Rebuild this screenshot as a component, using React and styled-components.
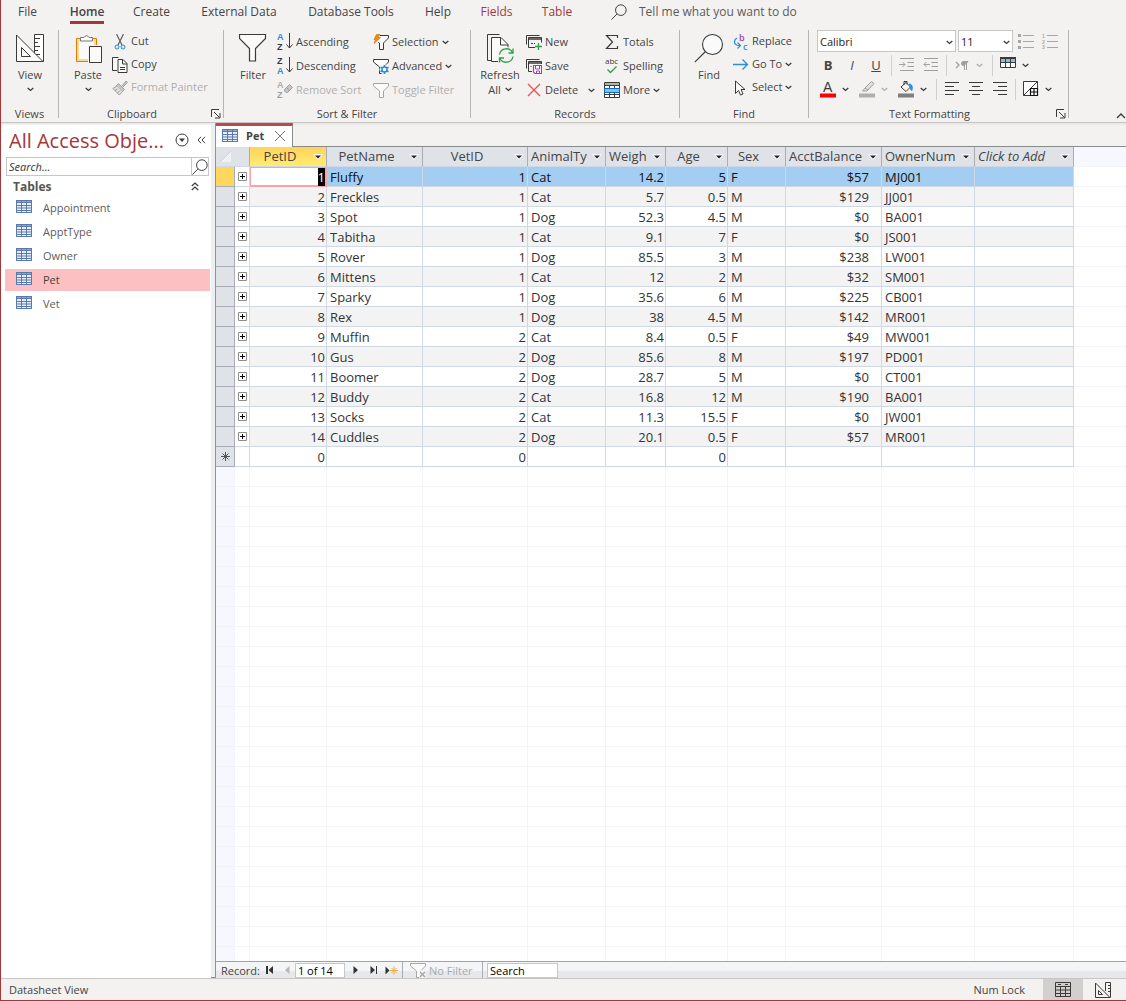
import React from 'react';
import styled, { createGlobalStyle, css } from 'styled-components';

const color = {
    red: '#a4373a',
    ribbon: '#f3f2f1',
    ink: '#444444',
    faded: '#b1aeac',
    line: '#d0d7e5',
    head: '#dfe3e8',
    headLine: '#a9adb5',
    blue: '#2b8fd6',
};

const GlobalStyle = createGlobalStyle`
    * { box-sizing: border-box; }
    body {
        margin: 0;
        font-family: "Open Sans", "Noto Sans", sans-serif;
        font-size: 11px;
        color: ${color.ink};
    }
    button, input, select { font: inherit; color: inherit; }
    button { border: 0; padding: 0; background: none; }
    svg { display: block; flex: none; }
`;

const Window = styled.div`
    height: 100vh;
    display: flex;
    flex-direction: column;
    background: #fff;
    border-left: 1px solid ${color.red};
    border-bottom: 1px solid ${color.red};
    overflow: hidden;
`;

/* ---------- ribbon ---------- */

const Ribbon = styled.header`
    flex: none;
    background: ${color.ribbon};
    border-bottom: 1px solid #c8c6c4;
`;

const TabBar = styled.nav`
    display: flex;
    height: 24px;
`;

const RibbonTab = styled.button`
    width: ${p => p.$width}px;
    height: 24px;
    flex: none;
    display: flex;
    flex-direction: column;
    align-items: center;
    padding-top: 2px;
    font-size: 12px;
    line-height: 19px;
    white-space: nowrap;
    color: ${p => (p.$context ? color.red : color.ink)};

    ${p => p.$active && css`
        font-weight: 600;
        span { border-bottom: 3px solid ${color.red}; }
    `}
`;

const TellMe = styled.button`
    display: flex;
    align-items: center;
    gap: 12px;
    margin-left: 21px;
    font-size: 12px;
    line-height: 22px;
    color: #5d5b59;
`;

const RibbonBody = styled.div`
    display: flex;
    height: 98px;
    padding-top: 6px;
`;

const Group = styled.section`
    width: ${p => p.$width}px;
    flex: none;
    display: flex;
    flex-direction: column;
`;

const GroupBody = styled.div`
    height: 76px;
    display: flex;
    gap: ${p => p.$gap || 2}px;
    padding-left: 7px;
`;

const GroupLabel = styled.div`
    display: flex;
    align-items: center;
    line-height: 16px;
    font-size: 11px;
    span { flex: 1; text-align: center; }
    button { width: 18px; padding-left: 6px; }
`;

const Divider = styled.div`
    width: 1px;
    flex: none;
    height: 88px;
    background: #b8b6b4;
`;

const BigButton = styled.button`
    width: 44px;
    height: 72px;
    display: flex;
    flex-direction: column;
    align-items: center;
    padding-top: 3px;
    line-height: 15px;
    > svg { margin-bottom: 4px; }
`;

const BigCaption = styled.span`
    display: flex;
    align-items: center;
    justify-content: center;
    gap: 4px;
    height: 15px;
`;

const Column = styled.div`
    width: ${p => (p.$width ? p.$width + 'px' : 'auto')};
    display: flex;
    flex-direction: column;
`;

const SmallRow = styled.div`
    display: flex;
    justify-content: space-between;
    align-items: center;
    padding-right: 5px;
`;

const SmallButton = styled.button`
    height: ${p => p.$height}px;
    display: flex;
    align-items: center;
    gap: 3px;
    white-space: nowrap;
    color: ${p => (p.disabled ? color.faded : color.ink)};
    span { padding-bottom: 2px; }
`;

const FormatRow = styled.div`
    display: flex;
    align-items: ${p => (p.$top ? 'flex-start' : 'center')};
    height: ${p => (p.$top ? 23 : 24)}px;
`;

const FormatButton = styled.button`
    width: 24px;
    height: 22px;
    display: flex;
    align-items: center;
    justify-content: center;
    font-size: 13px;
    line-height: 18px;
`;

const DropButton = styled.button`
    width: 15px;
    height: 22px;
    display: flex;
    align-items: center;
    padding-left: 2px;
`;

const FormatDivider = styled.div`
    width: 1px;
    height: 21px;
    margin: 0 3px;
    background: #d2d0ce;
`;

const SelectBox = styled.div`
    position: relative;
    width: ${p => p.$width}px;
    height: 22px;
    margin: 0 1px;

    select {
        appearance: none;
        width: 100%;
        height: 100%;
        padding: 0 2px;
        border: 1px solid #c8c6c4;
        border-radius: 0;
        background: #fff;
        color: #252423;
    }
    svg {
        position: absolute;
        right: 3px;
        top: 10px;
        pointer-events: none;
    }
`;

const Collapse = styled.button`
    margin-left: auto;
    align-self: flex-end;
    padding: 0 0 3px;
`;

/* ---------- navigation pane ---------- */

const Workspace = styled.div`
    flex: 1;
    min-height: 0;
    display: flex;
`;

const NavPane = styled.aside`
    width: 210px;
    flex: none;
    background: linear-gradient(#e6e5e4, #fff 3px);
`;

const NavTitle = styled.div`
    display: flex;
    align-items: center;
    height: 34px;
    padding: 0 5px 0 8px;
    h1 {
        flex: 1;
        margin: 0;
        padding-top: 2px;
        font-size: 20px;
        font-weight: 400;
        line-height: 32px;
        color: ${color.red};
        white-space: nowrap;
    }
    button { margin-left: 8px; }
`;

const NavSearch = styled.div`
    display: flex;
    width: 203px;
    height: 19px;
    margin-left: 5px;
    border: 1px solid #c8c6c4;
    input {
        flex: 1;
        min-width: 0;
        border: 0;
        padding: 0 2px;
        font-style: italic;
        background: transparent;
    }
    input::placeholder { color: #333; opacity: 1; }
    button {
        width: 17px;
        border-left: 1px solid #c8c6c4;
    }
`;

const NavSection = styled.div`
    display: flex;
    align-items: center;
    justify-content: space-between;
    height: 21px;
    padding: 0 12px 0 12px;
    font-size: 12px;
    font-weight: 700;
    color: #555;
`;

const NavItem = styled.button`
    display: flex;
    align-items: center;
    gap: 11px;
    width: 205px;
    height: 22px;
    margin: 0 0 2px 4px;
    padding: 0 0 2px 11px;
    text-align: left;
    color: ${p => (p.$selected ? '#444' : '#5d5d5d')};
    background: ${p => (p.$selected ? '#fdc0c2' : 'transparent')};
`;

const Splitter = styled.div`
    width: 5px;
    flex: none;
    background: #eeeff1;
    border-right: 1px solid #8d939b;
    border-bottom: 1px solid #8d939b;
`;

/* ---------- datasheet ---------- */

const Document = styled.main`
    flex: 1;
    min-width: 0;
    display: flex;
    flex-direction: column;
`;

const DocTabs = styled.div`
    display: flex;
    height: 24px;
    flex: none;
    background: linear-gradient(#e6e5e4, ${color.ribbon} 3px);
    border-bottom: 1px solid #868c8c;
`;

const DocTab = styled.div`
    display: flex;
    align-items: center;
    width: 77px;
    height: 24px;
    padding: 0 6px 2px;
    background: #fff;
    border-top: 3px solid #c0474e;
    border-right: 1px solid #868c8c;
    font-weight: 700;
    span { flex: 1; padding-left: 8px; }
`;

const Sheet = styled.div`
    flex: 1;
    min-height: 0;
    display: flex;
    flex-direction: column;
    overflow: hidden;
    background:
        linear-gradient(#f7f7ff, #f7f7ff) 0 0 / 100% 19px no-repeat,
        repeating-linear-gradient(#fff 0 19px, #f3f4f8 19px 20px);
`;

const Table = styled.table`
    flex: none;
    width: 858px;
    table-layout: fixed;
    border-collapse: separate;
    border-spacing: 0;
    font-size: 13px;
    line-height: 17px;
    color: #333;
`;

const HeadCell = styled.th`
    height: 20px;
    padding: 0;
    font-weight: 400;
    font-style: ${p => (p.$italic ? 'italic' : 'normal')};
    color: #444;
    background: ${p => (p.$active ? 'linear-gradient(#ffd35a, #ffec72)' : color.head)};
    border-right: 1px solid ${color.headLine};
    border-bottom: 1px solid ${color.line};
`;

const HeadInner = styled.div`
    display: flex;
    align-items: center;
    height: 19px;
    padding: 0 3px;
    white-space: nowrap;
    span {
        flex: 1;
        min-width: 0;
        padding-right: ${p => (p.$left ? 0 : 6)}px;
        text-align: ${p => (p.$left ? 'left' : 'center')};
    }
`;

const Row = styled.tr`
    background: ${p => (p.$current ? '#a3cef1' : p.$shaded ? '#f3f3f3' : '#fff')};
    color: ${p => (p.$current ? '#111' : '#333')};
`;

const Cell = styled.td`
    height: 20px;
    padding: 2px ${p => (p.$money ? 12 : 1)}px 0 3px;
    text-align: ${p => (p.$right ? 'right' : 'left')};
    white-space: nowrap;
    border-right: 1px solid ${color.line};
    border-bottom: 1px solid ${color.line};
    ${p => p.$editing && css`
        background: #fff;
        box-shadow: inset 0 0 0 1px #f7a3a8;
        outline: 1px solid #f7a3a8;
        outline-offset: -1px;
    `}
    mark { background: #000; color: #fff; }
`;

const Selector = styled.td`
    height: 20px;
    padding: 0;
    background: ${p => (p.$current ? '#ffd75e' : color.head)};
    border-right: 1px solid ${color.headLine};
    border-bottom: 1px solid ${color.headLine};
    svg { margin: 0 auto; }
`;

const ExpandCell = styled.td`
    padding: 0;
    background: #fff;
    border-right: 1px solid ${color.line};
    border-bottom: 1px solid ${color.line};
    button { display: block; margin: 0 auto; }
`;

const Empty = styled.div`
    flex: 1;
    min-height: 0;
    display: grid;
    grid-template-columns: ${p => p.$columns};
    div { border-right: 1px solid #f3f4f8; }
    div:first-child {
        background: repeating-linear-gradient(#f7f7ff 0 19px, #f1f2f8 19px 20px);
    }
`;

const RecordBar = styled.div`
    display: flex;
    align-items: center;
    height: 17px;
    flex: none;
    padding-left: 5px;
    border-top: 1px solid #9fa4ab;
    background: linear-gradient(#f4f5f7 0 9px, #e6e8eb 9px);
`;

const RecordInput = styled.input`
    width: ${p => p.$width}px;
    height: 15px;
    padding: 0 2px;
    border: 1px solid #c4c7cc;
    background: #fff;
    && { color: #000; }
`;

const StepButton = styled.button`
    width: ${p => p.$width || 20}px;
    height: 16px;
    display: flex;
    align-items: center;
    justify-content: center;
`;

const BarDivider = styled.div`
    width: 1px;
    height: 16px;
    margin-right: 4px;
    background: #a9adb5;
`;

const NoFilter = styled.button`
    display: flex;
    align-items: center;
    gap: 3px;
    width: 75px;
    padding-left: 3px;
    color: #a8a8a8;
    white-space: nowrap;
`;

const StatusBar = styled.footer`
    display: flex;
    align-items: center;
    height: 22px;
    flex: none;
    padding: 0 3px 0 8px;
    background: ${color.ribbon};
    border-top: 1px solid #c8c6c4;
    span:first-child { flex: 1; }
    span:nth-child(2) { margin-right: 18px; }
`;

const ViewButton = styled.button`
    width: 40px;
    height: 21px;
    display: flex;
    align-items: center;
    justify-content: center;
    background: ${p => (p.$active ? '#d2d0ce' : 'transparent')};
`;

/* ---------- icons ---------- */

const Svg = ({ w = 16, h = 16, children, ...rest }) => (
    <svg width={w} height={h} viewBox={`0 0 ${w} ${h}`} fill="none" stroke="#3b3a39" aria-hidden="true" {...rest}>
        {children}
    </svg>
);

const Letter = styled.text`
    font-family: "Liberation Sans", sans-serif;
    font-size: ${p => p.$size || 9}px;
    font-weight: ${p => (p.$thin ? 400 : 700)};
    stroke: none;
`;

const Chevron = ({ faded }) => (
    <Svg w={7} h={5} stroke={faded ? color.faded : '#3b3a39'} strokeWidth="1.3">
        <path d="M.7 1l2.8 2.5L6.3 1" />
    </Svg>
);

const ViewIcon = () => (
    <Svg w={30} h={30}>
        <path d="M19.5 1.5h9v27h-9z" fill="#fff" />
        <path d="M20 5.5h5M20 9.5h3M20 13.5h5M20 17.5h3M20 21.5h5M20 25h3" />
        <path d="M1.5 2v26.5H28z" fill="#fafafa" />
        <path d="M6.500 14.500v9h9z" />
    </Svg>
);

const PasteIcon = () => (
    <Svg w={30} h={30}>
        <path d="M3.500 5.500h20v23h-20z" fill="#f8dc8f" stroke="#e07a10" />
        <path d="M6 8h15v18H6z" fill="#fafafa" stroke="none" />
        <path d="M7.500 8V4.500H11a2.700 2.700 0 0 1 5 0h3.500V8z" fill="#fff" stroke="#797775" />
        <path d="M15 12h15v18H15z" fill={color.ribbon} stroke="none" />
        <path d="M16.500 13.500h12v16h-12z" fill="#fafafa" />
    </Svg>
);

const FunnelIcon = () => (
    <Svg w={28} h={30}>
        <path d="M.5 1.500h26v4l-10 10v12.500h-6V15.500L.5 5.500z" fill="#fafafa" strokeWidth="1.200" />
    </Svg>
);

const RefreshIcon = () => (
    <Svg w={28} h={30}>
        <path d="M5.500 27.500h-4v-26h12" />
        <path d="M12 28.500H5.500v-24h9.500l7 7V16" fill="#fafafa" />
        <path d="M14.500 4.500v7.500h7.500" />
        <circle cx="20" cy="22.500" r="8.500" fill={color.ribbon} stroke="none" />
        <g stroke="#2f9e4a" strokeWidth="1.300">
            <path d="M13.500 21.500a7 7 0 0 1 13.300-1.500M27 23.500a7 7 0 0 1-13.300 1.500" />
            <path d="M27 15.500v4.500h-4.500M13.500 29.500V25H18" />
        </g>
    </Svg>
);

const LensIcon = ({ size = 30, fill = '#fafafa' }) => (
    <svg width={size} height={size} viewBox="0 0 30 30" fill="none" stroke="#3b3a39" strokeWidth={size < 20 ? 1.8 : 1.1} aria-hidden="true">
        <circle cx="18.500" cy="11.500" r="10" fill={fill} />
        <path d="M11.500 18.500L.8 29.200" />
    </svg>
);

const CutIcon = () => (
    <Svg>
        <path d="M4.500 0l5.500 11M11.500 0L6 11" stroke="#605e5c" strokeWidth="1.200" />
        <circle cx="5" cy="13" r="2" stroke={color.blue} fill="#d5ebfa" />
        <circle cx="11" cy="13" r="2" stroke={color.blue} fill="#d5ebfa" />
    </Svg>
);

const CopyIcon = () => (
    <Svg>
        <path d="M5 13.500H.5V.5h6M6 2.500h5l4 4v9H6z" fill="#fafafa" />
        <path d="M10.500 3v4H15M8 10.500h5M8 12.500h5" />
    </Svg>
);

const PainterIcon = () => (
    <Svg stroke="#a19f9d">
        <path d="M10 6l4-5 1.500 1.500L11 7" fill="#c8c6c4" />
        <path d="M6.500 3.500l6 6-2 2-6-6z" fill="#c8c6c4" />
        <path d="M5 6L.8 8.500l6.500 6.500L10.500 11.500" fill="#e1dfdd" />
        <path d="M3 10.500l2.500-1.500M5.500 13l2.500-2.500" />
    </Svg>
);

const SortIcon = ({ first, second, flip }) => (
    <Svg w={16} h={20}>
        <Letter x="0" y="8" fill={flip ? '#3b3a39' : color.blue}>{first}</Letter>
        <Letter x="0" y="18" fill={flip ? color.blue : '#3b3a39'}>{second}</Letter>
        <path d="M12.500 1v15M9.500 12.500l3 3.500 3-3.500" />
    </Svg>
);

const RemoveSortIcon = () => (
    <Svg w={16} h={20} stroke="#a19f9d">
        <Letter x="0" y="8" fill="#b1aeac">A</Letter>
        <Letter x="0" y="18" fill="#a19f9d">Z</Letter>
        <path d="M7.500 9.500l5-5 3 3-5 5H9L7.500 11z" fill="#c8c6c4" />
        <path d="M9.500 7.500l3 3" />
    </Svg>
);

const SmallFunnel = ({ kind }) => (
    <Svg stroke={kind === 'off' || kind === 'clear' ? '#a8a6a4' : '#3b3a39'}>
        <path d="M.5 1.500h15v2.500l-5 5v6.500h-4V9L.5 4z" fill="#fafafa" />
        {kind === 'selection' && (
            <>
                <path d="M0 0h7v8H0z" fill={color.ribbon} stroke="none" />
                <path d="M3.500.5h3.500l-2 3h2.500L1 9.500l1.500-4H1z" fill="#f28a1c" stroke="#d9730d" strokeWidth=".7" />
            </>
        )}
        {kind === 'advanced' && (
            <>
                <circle cx="11.500" cy="11.500" r="5" fill={color.ribbon} stroke="none" />
                <circle cx="11.500" cy="11.500" r="2.500" stroke={color.blue} strokeWidth="1.400" fill="#fff" />
                <path d="M11.500 7v2M11.500 14v2M7.500 9.300l1.700 1M13.700 12.800l1.800 1M7.500 13.800l1.700-1M13.700 10.300l1.800-1" stroke={color.blue} strokeWidth="1.600" />
            </>
        )}
        {kind === 'clear' && (
            <>
                <path d="M9 8h7v8H9z" fill="#f0f1f3" stroke="none" />
                <path d="M10 10l5 5M15 10l-5 5" strokeWidth="1.400" />
            </>
        )}
    </Svg>
);

const NewIcon = () => (
    <Svg>
        <path d="M.5 10.500v-9h13M2.500 3.500h13v10h-13z" />
        <path d="M3 5h12" strokeWidth="1.500" />
        <path d="M5 9.500h2M8 9.500h2" />
        <path d="M9 8.500h7v7H9z" fill={color.ribbon} stroke="none" />
        <path d="M12.500 9v7M9 12.500h7" stroke="#2f9e4a" strokeWidth="1.300" />
    </Svg>
);

const SaveIcon = () => (
    <Svg>
        <path d="M.5 10.500v-9h13M6 13.500H2.500v-10h13V6" />
        <path d="M3 5h12" strokeWidth="1.500" />
        <path d="M4.500 8.500h1" />
        <path d="M7.500 7.500h8v8h-6.500l-1.500-1.500z" fill="#fff" stroke="#a33fb5" strokeWidth="1.200" />
        <path d="M9.500 8v3h4V8M10.500 15.500v-2.500h3v2.500" stroke="#a33fb5" />
    </Svg>
);

const DeleteIcon = () => (
    <Svg stroke="#e8504f" strokeWidth="1.300">
        <path d="M2 2l12 12M14 2L2 14" />
    </Svg>
);

const SigmaIcon = () => (
    <Svg strokeWidth="1.200">
        <path d="M13.500 4V1.500H2.500L8.500 8l-6 6.500h11V12" />
    </Svg>
);

const SpellingIcon = () => (
    <Svg w={16} h={18}>
        <text x="1" y="7" fontSize="8" stroke="none" fill="#3b3a39">abc</text>
        <path d="M3.500 12.500l3 3 6-6" stroke="#2f9e4a" strokeWidth="1.300" />
    </Svg>
);

const MoreIcon = () => (
    <Svg>
        <path d="M.5.500h15v15H.5z" fill="#fff" />
        <path d="M1 1h14v2.500H1z" fill="#b5b3b1" stroke="none" />
        <path d="M.5 3.500h15M5.500 4v11.500M10.500 4v11.500M.5 12.500h15" />
        <path d="M.5 6.500h15v4H.5z" fill="#83beec" stroke="#0f6cbd" />
    </Svg>
);

const ReplaceIcon = () => (
    <Svg>
        <text x="6" y="7" fontSize="9" fontWeight="600" stroke="none" fill="#a33fb5">b</text>
        <text x="10" y="16" fontSize="9" fontWeight="600" stroke="none" fill={color.blue}>c</text>
        <path d="M4 4C.5 6 .5 11 5 11.500H7M4.500 8.500l3 3-3 3" stroke={color.blue} strokeWidth="1.200" />
    </Svg>
);

const GoToIcon = () => (
    <Svg stroke={color.blue} strokeWidth="1.300">
        <path d="M0 7.500h14.500M9.500 2.500l5 5-5 5" />
    </Svg>
);

const PointerIcon = () => (
    <Svg>
        <path d="M2.500 1v12.500l3-3 2 4.500 2.500-1-2-4.500h4z" fill="#fafafa" />
    </Svg>
);

const LauncherIcon = () => (
    <Svg w={10} h={10}>
        <path d="M.5 8V.5H8M3 3l5.500 5.500M9 4v5H4" />
    </Svg>
);

const ListIcon = ({ numbered }) => (
    <Svg stroke="#a8a6a4">
        {numbered ? (
            <>
                <Letter x="0" y="5" $size={5} fill="#a8a6a4">1</Letter>
                <Letter x="0" y="11" $size={5} fill="#a8a6a4">2</Letter>
                <Letter x="0" y="16" $size={5} fill="#a8a6a4">3</Letter>
            </>
        ) : (
            <path d="M0 2.500h3M0 8.500h3M0 14.500h3" strokeWidth="3" />
        )}
        <path d="M5 2.500h11M5 8.500h11M5 14.500h11" />
    </Svg>
);

const IndentIcon = ({ out }) => (
    <Svg stroke="#a19f9d">
        <path d="M1 1.500h14M8.500 5.500H15M8.500 9.500H15M1 13.500h14" />
        <path d={out ? 'M1 7.500h6M3.500 5L1 7.500 3.500 10' : 'M0 7.500h6M3.500 5L6 7.500 3.500 10'} />
    </Svg>
);

const ParagraphIcon = () => (
    <Svg w={14} h={12} stroke="#a19f9d">
        <path d="M1 3l3 3-3 3" strokeWidth="1.300" />
        <path d="M13 2.500H8.500a2 2 0 0 0 0 4H9zM9.500 2.500V11M11.500 2.500V11" fill="#a19f9d" />
    </Svg>
);

const GridlinesIcon = () => (
    <Svg>
        <path d="M.5 1.500h15v9H.5z" fill="#fff" />
        <path d="M1 2h14v3H1z" fill="#83beec" stroke="none" />
        <path d="M.5 5.500h15M5.500 2v8.500M10.500 2v8.500" />
        <path d="M0 1h16" strokeWidth="2" />
    </Svg>
);

const FontColorIcon = () => (
    <Svg w={16} h={18}>
        <Letter x="3" y="12" $size={14} $thin fill="#3b3a39">A</Letter>
        <path d="M0 13.500h16v4H0z" fill="#ff0000" stroke="none" />
    </Svg>
);

const HighlightIcon = () => (
    <Svg w={16} h={18} stroke="#a19f9d">
        <path d="M6 8l6.500-6.500 2.500 2L9 10zM6 8l-2.500 3H8l1-1" fill="#e1dfdd" />
        <path d="M0 13.500h16v4H0z" fill="#b1aeac" stroke="none" />
    </Svg>
);

const FillIcon = () => (
    <Svg w={16} h={18}>
        <path d="M8 2.500L12.500 7 8 11.500 3 7zM6 5V1.500h3v3" fill="#fafafa" />
        <path d="M11.500 4c3 .5 3 3 2.500 6.500-2-.5-1.500-3-2.500-6.500" fill={color.blue} stroke={color.blue} />
        <path d="M0 13.500h16v4H0z" fill="#7f7f7f" stroke="none" />
    </Svg>
);

const AlignIcon = ({ lines }) => (
    <Svg>
        <path d={lines} />
    </Svg>
);

const AlternateIcon = () => (
    <Svg>
        <path d="M.5.500h14v14H.5z" fill="#fff" />
        <path d="M.5 14.500l14-14" />
        <path d="M7.500 7.500h7v7h-7zM11 7.500v7M7.500 11h7" stroke="#111" strokeWidth="1.200" fill="#fff" />
    </Svg>
);

const TableIcon = () => (
    <Svg stroke="none">
        <path d="M0 1h16v13H0z" fill="#5b79ae" />
        <path d="M1 4h4v2H1zM6 4h4v2H6zM11 4h4v2h-4zM1 7h4v1.500H1zM6 7h4v1.500H6zM11 7h4v1.500h-4zM1 9.500h4V11H1zM6 9.500h4V11H6zM11 9.500h4V11h-4zM1 12h4v1H1zM6 12h4v1H6zM11 12h4v1h-4z" fill="#e8eff9" />
        <path d="M1 2h4v1H1zM6 2h4v1H6zM11 2h4v1h-4z" fill="#8ea9d6" />
    </Svg>
);

const MenuIcon = () => (
    <Svg w={14} h={14}>
        <circle cx="7" cy="7" r="6" />
        <path d="M4 5.500h6L7 9z" fill="#3b3a39" stroke="none" />
    </Svg>
);

const ShutterIcon = () => (
    <Svg w={9} h={8}>
        <path d="M4 .8L1 4l3 3.200M8 .8L5 4l3 3.200" />
    </Svg>
);

const DoubleUpIcon = () => (
    <Svg w={8} h={9}>
        <path d="M.8 4L4 1l3.200 3M.8 8L4 5l3.200 3" strokeWidth="1.200" />
    </Svg>
);

const ExpandIcon = () => (
    <Svg w={9} h={9}>
        <path d="M.5.500h8v8h-8z" fill="#fff" stroke="#8d8d8d" />
        <path d="M2 4.500h5M4.500 2v5" stroke="#000" />
    </Svg>
);

const StarIcon = () => (
    <Svg w={11} h={11} stroke="#555">
        <path d="M5.500 1v9M1 5.500h9M2.500 2.500l6 6M8.500 2.500l-6 6" />
    </Svg>
);

const ArrowIcon = () => (
    <Svg w={10} h={8}>
        <path d="M0 1h10L5 7z" fill="#f7f8fa" stroke="none" />
        <path d="M2 2.500h6L5 5.500z" fill="#222" stroke="none" />
    </Svg>
);

/* ---------- data ---------- */

const tabs = [
    { name: 'File', width: 53 },
    { name: 'Home', width: 66, active: true },
    { name: 'Create', width: 63 },
    { name: 'External Data', width: 112 },
    { name: 'Database Tools', width: 112 },
    { name: 'Help', width: 62 },
    { name: 'Fields', width: 55, context: true },
    { name: 'Table', width: 66, context: true },
];

const objects = ['Appointment', 'ApptType', 'Owner', 'Pet', 'Vet'];

const columns = [
    { name: 'PetID', width: 77, right: true, active: true },
    { name: 'PetName', width: 96 },
    { name: 'VetID', width: 105, right: true },
    { name: 'AnimalTy', width: 78, left: true },
    { name: 'Weigh', width: 60, left: true, right: true },
    { name: 'Age', width: 62, right: true },
    { name: 'Sex', width: 58 },
    { name: 'AcctBalance', width: 96, left: true, right: true, money: true },
    { name: 'OwnerNum', width: 93, left: true },
    { name: 'Click to Add', width: 99, left: true, italic: true },
];

const pets = [
    [1, 'Fluffy', 1, 'Cat', '14.2', '5', 'F', '$57', 'MJ001'],
    [2, 'Freckles', 1, 'Cat', '5.7', '0.5', 'M', '$129', 'JJ001'],
    [3, 'Spot', 1, 'Dog', '52.3', '4.5', 'M', '$0', 'BA001'],
    [4, 'Tabitha', 1, 'Cat', '9.1', '7', 'F', '$0', 'JS001'],
    [5, 'Rover', 1, 'Dog', '85.5', '3', 'M', '$238', 'LW001'],
    [6, 'Mittens', 1, 'Cat', '12', '2', 'M', '$32', 'SM001'],
    [7, 'Sparky', 1, 'Dog', '35.6', '6', 'M', '$225', 'CB001'],
    [8, 'Rex', 1, 'Dog', '38', '4.5', 'M', '$142', 'MR001'],
    [9, 'Muffin', 2, 'Cat', '8.4', '0.5', 'F', '$49', 'MW001'],
    [10, 'Gus', 2, 'Dog', '85.6', '8', 'M', '$197', 'PD001'],
    [11, 'Boomer', 2, 'Dog', '28.7', '5', 'M', '$0', 'CT001'],
    [12, 'Buddy', 2, 'Cat', '16.8', '12', 'M', '$190', 'BA001'],
    [13, 'Socks', 2, 'Cat', '11.3', '15.5', 'F', '$0', 'JW001'],
    [14, 'Cuddles', 2, 'Dog', '20.1', '0.5', 'F', '$57', 'MR001'],
];

const newRow = ['0', '', '0', '', '', '0', '', '', ''];

const emptyColumns = ['19px', '15px', ...columns.map(c => c.width + 'px')];

/* ---------- components ---------- */

const Small = ({ icon, label, menu, height = 24, disabled }) => (
    <SmallButton $height={height} disabled={disabled}>
        {icon}
        <span>{label}</span>
        {menu && <Chevron />}
    </SmallButton>
);

const RibbonGroup = ({ label, width, gap, launcher, children }) => (
    <>
        <Group $width={width} aria-label={label}>
            <GroupBody $gap={gap}>{children}</GroupBody>
            <GroupLabel>
                <span>{label}</span>
                {launcher && <button aria-label={label + ' settings'}><LauncherIcon /></button>}
            </GroupLabel>
        </Group>
        <Divider />
    </>
);

const TextFormatting = () => (
    <Column>
        <FormatRow $top>
            <SelectBox $width={139}>
                <select aria-label="Font"><option>Calibri</option></select>
                <Chevron />
            </SelectBox>
            <SelectBox $width={55}>
                <select aria-label="Font size"><option>11</option></select>
                <Chevron />
            </SelectBox>
            <FormatButton aria-label="Bullets"><ListIcon /></FormatButton>
            <FormatButton aria-label="Numbering"><ListIcon numbered /></FormatButton>
        </FormatRow>
        <FormatRow>
            <FormatButton aria-label="Bold"><b>B</b></FormatButton>
            <FormatButton aria-label="Italic"><i>I</i></FormatButton>
            <FormatButton aria-label="Underline"><u>U</u></FormatButton>
            <FormatDivider />
            <FormatButton aria-label="Increase indent"><IndentIcon /></FormatButton>
            <FormatButton aria-label="Decrease indent"><IndentIcon out /></FormatButton>
            <FormatDivider />
            <FormatButton aria-label="Text direction"><ParagraphIcon /></FormatButton>
            <DropButton aria-label="Direction options"><Chevron faded /></DropButton>
            <FormatDivider />
            <FormatButton aria-label="Gridlines"><GridlinesIcon /></FormatButton>
            <DropButton aria-label="Gridline options"><Chevron /></DropButton>
        </FormatRow>
        <FormatRow>
            <FormatButton aria-label="Font color"><FontColorIcon /></FormatButton>
            <DropButton aria-label="Font colors"><Chevron /></DropButton>
            <FormatButton aria-label="Highlight"><HighlightIcon /></FormatButton>
            <DropButton aria-label="Highlight colors"><Chevron faded /></DropButton>
            <FormatButton aria-label="Background color"><FillIcon /></FormatButton>
            <DropButton aria-label="Background colors"><Chevron /></DropButton>
            <FormatDivider />
            <FormatButton aria-label="Align left"><AlignIcon lines="M1 1.500h14M1 5.500h9M1 9.500h14M1 13.500h9" /></FormatButton>
            <FormatButton aria-label="Center"><AlignIcon lines="M1 1.500h14M4 5.500h8M1 9.500h14M4 13.500h8" /></FormatButton>
            <FormatButton aria-label="Align right"><AlignIcon lines="M1 1.500h14M6 5.500h9M1 9.500h14M6 13.500h9" /></FormatButton>
            <FormatDivider />
            <FormatButton aria-label="Alternate row color"><AlternateIcon /></FormatButton>
            <DropButton aria-label="Row colors"><Chevron /></DropButton>
        </FormatRow>
    </Column>
);

const RibbonPanel = () => (
    <Ribbon>
        <TabBar>
            {tabs.map(t => (
                <RibbonTab key={t.name} $width={t.width} $active={t.active} $context={t.context}>
                    <span>{t.name}</span>
                </RibbonTab>
            ))}
            <TellMe>
                <LensIcon size={16} fill="none" />
                Tell me what you want to do
            </TellMe>
        </TabBar>
        <RibbonBody>
            <RibbonGroup label="Views" width={57}>
                <BigButton>
                    <ViewIcon />
                    <BigCaption>View</BigCaption>
                    <BigCaption><Chevron /></BigCaption>
                </BigButton>
            </RibbonGroup>
            <RibbonGroup label="Clipboard" width={164} launcher>
                <BigButton>
                    <PasteIcon />
                    <BigCaption>Paste</BigCaption>
                    <BigCaption><Chevron /></BigCaption>
                </BigButton>
                <Column>
                    <Small icon={<CutIcon />} label="Cut" height={23} />
                    <Small icon={<CopyIcon />} label="Copy" height={23} />
                    <Small icon={<PainterIcon />} label="Format Painter" height={23} disabled />
                </Column>
            </RibbonGroup>
            <RibbonGroup label="Sort & Filter" width={246}>
                <BigButton>
                    <FunnelIcon />
                    <BigCaption>Filter</BigCaption>
                </BigButton>
                <Column $width={94}>
                    <Small icon={<SortIcon first="A" second="Z" />} label="Ascending" />
                    <Small icon={<SortIcon first="Z" second="A" flip />} label="Descending" />
                    <Small icon={<RemoveSortIcon />} label="Remove Sort" disabled />
                </Column>
                <Column>
                    <Small icon={<SmallFunnel kind="selection" />} label="Selection" menu />
                    <Small icon={<SmallFunnel kind="advanced" />} label="Advanced" menu />
                    <Small icon={<SmallFunnel kind="off" />} label="Toggle Filter" disabled />
                </Column>
            </RibbonGroup>
            <RibbonGroup label="Records" width={208} gap={4}>
                <BigButton>
                    <RefreshIcon />
                    <BigCaption>Refresh</BigCaption>
                    <BigCaption>All <Chevron /></BigCaption>
                </BigButton>
                <Column $width={74}>
                    <Small icon={<NewIcon />} label="New" />
                    <Small icon={<SaveIcon />} label="Save" />
                    <SmallRow>
                        <Small icon={<DeleteIcon />} label="Delete" />
                        <button aria-label="Delete options"><Chevron /></button>
                    </SmallRow>
                </Column>
                <Column>
                    <Small icon={<SigmaIcon />} label="Totals" />
                    <Small icon={<SpellingIcon />} label="Spelling" />
                    <Small icon={<MoreIcon />} label="More" menu />
                </Column>
            </RibbonGroup>
            <RibbonGroup label="Find" width={128}>
                <BigButton>
                    <LensIcon />
                    <BigCaption>Find</BigCaption>
                </BigButton>
                <Column>
                    <Small icon={<ReplaceIcon />} label="Replace" height={23} />
                    <Small icon={<GoToIcon />} label="Go To" height={23} menu />
                    <Small icon={<PointerIcon />} label="Select" height={23} menu />
                </Column>
            </RibbonGroup>
            <RibbonGroup label="Text Formatting" width={259} launcher>
                <TextFormatting />
            </RibbonGroup>
            <Collapse aria-label="Collapse ribbon">
                <Svg w={10} h={6} strokeWidth="1.300"><path d="M1 5l4-4 4 4" /></Svg>
            </Collapse>
        </RibbonBody>
    </Ribbon>
);

const ObjectPane = () => (
    <NavPane>
        <NavTitle>
            <h1>All Access Obje...</h1>
            <button aria-label="Object menu"><MenuIcon /></button>
            <button aria-label="Hide pane"><ShutterIcon /></button>
        </NavTitle>
        <NavSearch>
            <input type="text" placeholder="Search..." aria-label="Search objects" />
            <button aria-label="Search"><LensIcon size={16} fill="none" /></button>
        </NavSearch>
        <NavSection>
            Tables
            <button aria-label="Collapse tables"><DoubleUpIcon /></button>
        </NavSection>
        {objects.map(name => (
            <NavItem key={name} $selected={name === 'Pet'}>
                <TableIcon />
                {name}
            </NavItem>
        ))}
    </NavPane>
);

const Datasheet = () => (
    <Sheet>
        <Table>
            <colgroup>
                {emptyColumns.map((w, i) => <col key={i} style={{ width: w }} />)}
            </colgroup>
            <thead>
                <tr>
                    <HeadCell colSpan={2}>
                        <Svg w={18} h={19}><path d="M15 4v11H4z" fill="#eef2f8" stroke="none" /><path d="M4 15L15 4" stroke="#c3d3e6" /></Svg>
                    </HeadCell>
                    {columns.map(c => (
                        <HeadCell key={c.name} $active={c.active} $italic={c.italic}>
                            <HeadInner $left={c.left}>
                                <span>{c.name}</span>
                                <button aria-label={c.name + ' menu'}><ArrowIcon /></button>
                            </HeadInner>
                        </HeadCell>
                    ))}
                </tr>
            </thead>
            <tbody>
                {[...pets, newRow].map((row, r) => {
                    const blank = row === newRow;
                    return (
                        <Row key={r} $current={r === 0} $shaded={r % 2 === 1}>
                            <Selector $current={r === 0}>{blank && <StarIcon />}</Selector>
                            <ExpandCell>
                                {!blank && <button aria-label={'Expand ' + row[1]}><ExpandIcon /></button>}
                            </ExpandCell>
                            {columns.map((c, i) => (
                                <Cell key={c.name} $right={c.right} $money={c.money} $editing={r === 0 && i === 0}>
                                    {r === 0 && i === 0 ? <mark>{row[i]}</mark> : row[i]}
                                </Cell>
                            ))}
                        </Row>
                    );
                })}
            </tbody>
        </Table>
        <Empty $columns={emptyColumns.join(' ')}>
            {emptyColumns.map((w, i) => <div key={i} />)}
        </Empty>
    </Sheet>
);

const RecordNavigator = () => (
    <RecordBar>
        <label htmlFor="record">Record:</label>
        <StepButton aria-label="First record"><Svg w={8} h={8} fill="#333" stroke="none"><path d="M0 0h2v8H0zM7 0v8L2.500 4z" /></Svg></StepButton>
        <StepButton $width={15} aria-label="Previous record"><Svg w={5} h={8} fill="#b8b8b8" stroke="none"><path d="M4.500 0v8L0 4z" /></Svg></StepButton>
        <RecordInput id="record" type="text" defaultValue="1 of 14" $width={50} />
        <StepButton $width={22} aria-label="Next record"><Svg w={5} h={8} fill="#333" stroke="none"><path d="M.5 0v8L5 4z" /></Svg></StepButton>
        <StepButton $width={15} aria-label="Last record"><Svg w={8} h={8} fill="#333" stroke="none"><path d="M6 0h1v8H6zM.5 0v8L5 4z" /></Svg></StepButton>
        <StepButton $width={20} aria-label="New record">
            <Svg w={13} h={9} stroke="#e8b04a">
                <path d="M.5.500v8L4.500 4.500z" fill="#333" stroke="none" />
                <path d="M9 .5v8M5 4.500h8M6.500 2l5 5M11.500 2l-5 5" />
            </Svg>
        </StepButton>
        <BarDivider />
        <NoFilter disabled><SmallFunnel kind="clear" />No Filter</NoFilter>
        <BarDivider />
        <RecordInput type="text" defaultValue="Search" aria-label="Search records" $width={71} />
    </RecordBar>
);

const App = () => (
    <>
        <GlobalStyle />
        <Window>
            <RibbonPanel />
            <Workspace>
                <ObjectPane />
                <Splitter />
                <Document>
                    <DocTabs>
                        <DocTab>
                            <TableIcon />
                            <span>Pet</span>
                            <button aria-label="Close Pet"><Svg w={12} h={12} stroke="#777"><path d="M1 1l10 10M11 1L1 11" /></Svg></button>
                        </DocTab>
                    </DocTabs>
                    <Datasheet />
                    <RecordNavigator />
                </Document>
            </Workspace>
            <StatusBar>
                <span>Datasheet View</span>
                <span>Num Lock</span>
                <ViewButton $active aria-label="Datasheet View">
                    <Svg><path d="M.5.500h15v14H.5zM.5 4.500h15M.5 8h15M.5 11.500h15M5.500 5v9.500M10.500 5v9.500" /><path d="M3 2.500h3M10 2.500h3" /></Svg>
                </ViewButton>
                <ViewButton aria-label="Design View">
                    <Svg><path d="M.5 1v14.500H15zM3.500 8.500v4h4zM10.500.500h5v15M10.500.500V9M13 3.500h2.500M13 6.500h2.500M13 9.500h2.500" /></Svg>
                </ViewButton>
            </StatusBar>
        </Window>
    </>
);

export default App;
